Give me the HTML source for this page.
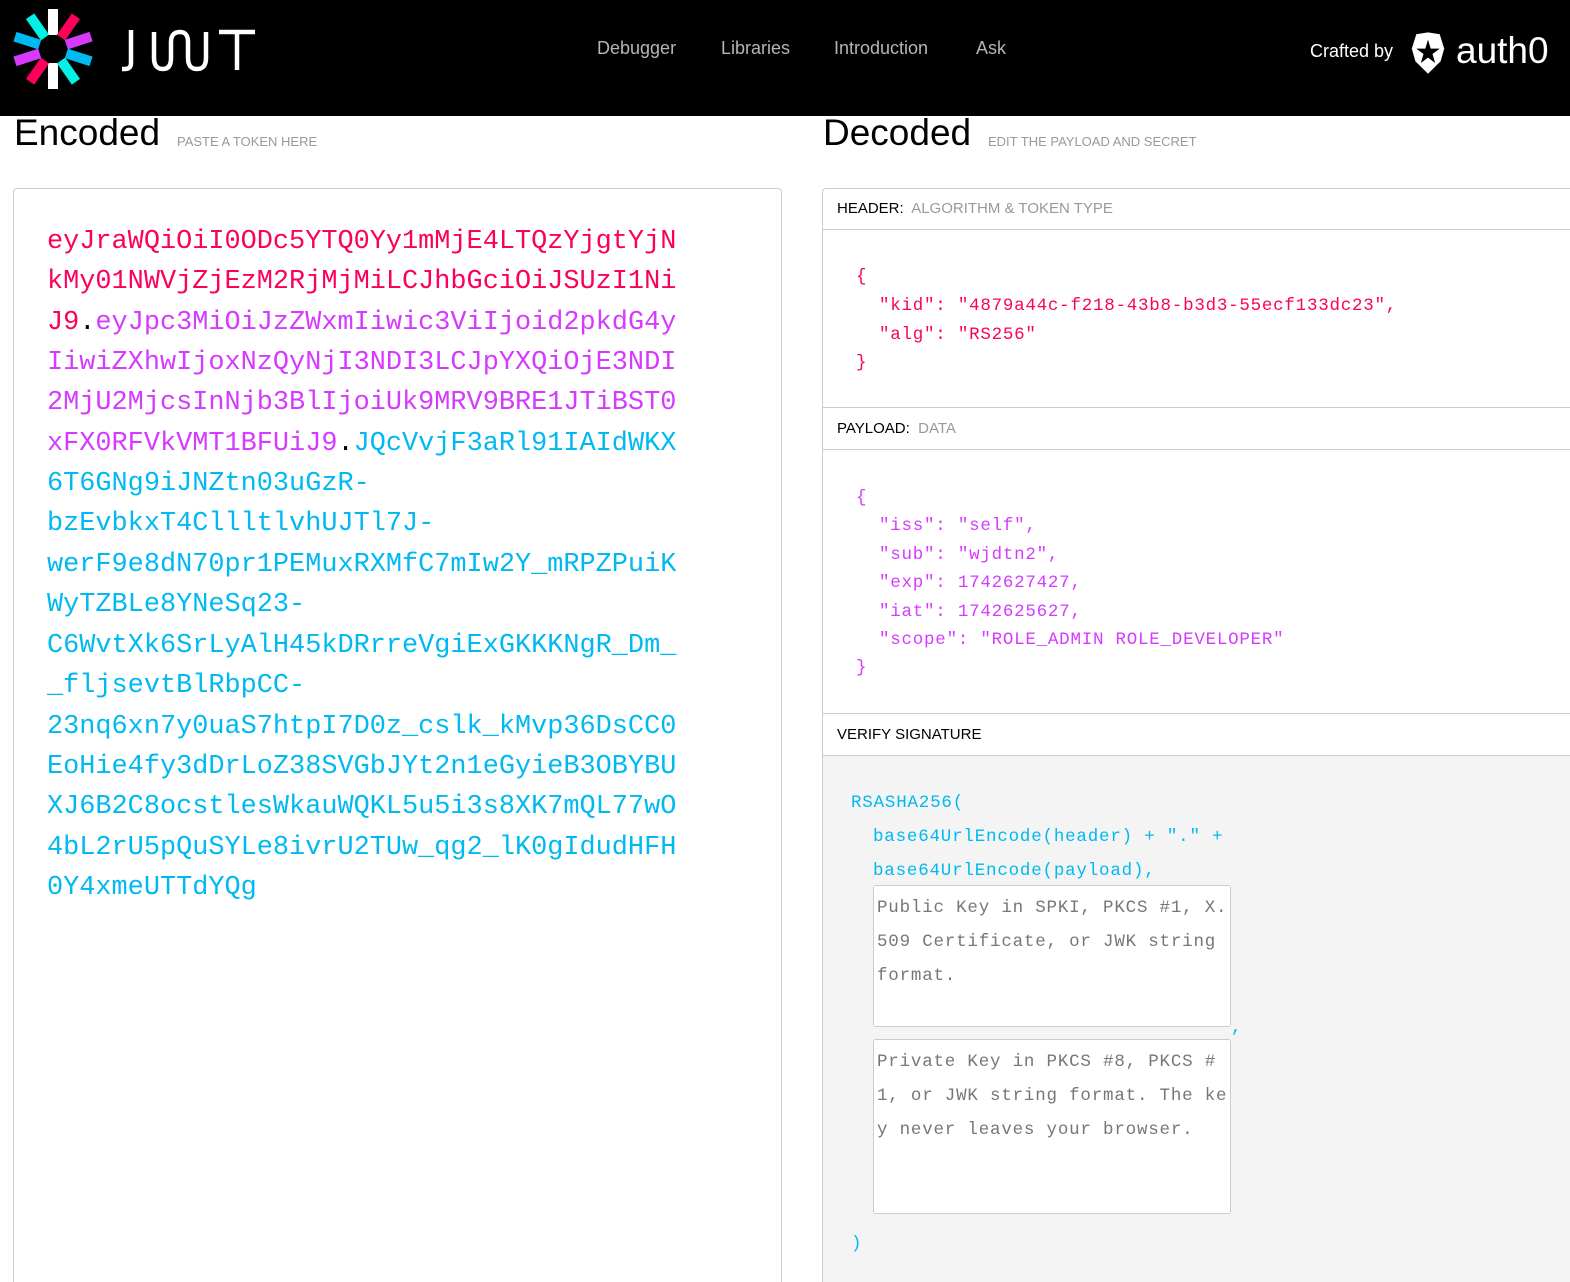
<!DOCTYPE html>
<html style="overflow:hidden"><head><meta charset="utf-8"><style>
*{margin:0;padding:0;box-sizing:border-box}
html,body{width:1570px;height:1282px;overflow:hidden}
body{background:#fff;font-family:"Liberation Sans",sans-serif;position:relative}
.a{position:absolute;white-space:pre}
.top{position:absolute;left:0;top:0;width:1570px;height:116px;background:#000}
.nav{position:absolute;top:38px;font-size:18px;color:#b5b5b5}
.enc{position:absolute;left:47px;font-family:"Liberation Mono",monospace;font-size:26.9px;letter-spacing:0;line-height:40px;height:40px;white-space:pre}
.r{color:#fb015b}.p{color:#d63aff}.b{color:#00b9f1}.k{color:#000}
.js{position:absolute;font-family:"Liberation Mono",monospace;font-size:17.5px;letter-spacing:0.76px;line-height:28px;height:28px;white-space:pre}
.sg{position:absolute;font-family:"Liberation Mono",monospace;font-size:17.5px;letter-spacing:0.8px;line-height:34px;height:34px;white-space:pre;color:#00b9f1}
.ta{position:absolute;left:873px;width:358px;background:#fff;border:1px solid #ccc;border-radius:3px}
.tt{position:absolute;left:877px;font-family:"Liberation Mono",monospace;font-size:17.5px;letter-spacing:0.8px;line-height:34px;height:34px;white-space:pre;color:#777}
.lbl{position:absolute;left:837px;font-size:15px;color:#000}
.lbl span{color:#999}
.hl{position:absolute;left:822px;width:748px;height:1px;background:#ccc}
</style></head><body>
<div class="top"></div>
<svg class="a" style="left:0;top:0" width="270" height="100" viewBox="0 0 270 100">
<g transform="translate(53,49)">
<rect x="-5" y="-40" width="10" height="26" fill="#fff"/>
<rect x="-5" y="14" width="10" height="26" fill="#fff"/>
<rect x="-5" y="-40" width="10" height="26" fill="#fb015b" transform="rotate(35)"/>
<rect x="-5" y="-40" width="10" height="26" fill="#d63aff" transform="rotate(72)"/>
<rect x="-5" y="-40" width="10" height="26" fill="#00b9f1" transform="rotate(108)"/>
<rect x="-5" y="-40" width="10" height="26" fill="#00f2e6" transform="rotate(145)"/>
<rect x="-5" y="-40" width="10" height="26" fill="#fb015b" transform="rotate(215)"/>
<rect x="-5" y="-40" width="10" height="26" fill="#d63aff" transform="rotate(252)"/>
<rect x="-5" y="-40" width="10" height="26" fill="#00b9f1" transform="rotate(288)"/>
<rect x="-5" y="-40" width="10" height="26" fill="#00f2e6" transform="rotate(325)"/>
</g>
<g fill="none" stroke="#fff" stroke-width="4.5">
<path d="M131 30 V63 Q131 69 125 69 H122"/>
<path d="M154 32 V58 Q154 69 163 69 Q171 69 171 58 V42 Q171 32 180 32 Q188 32 188 42 V58 Q188 69 197 69 Q206 69 206 58 V32"/>
<path d="M219 32 H255 M237 32 V70"/>
</g>
</svg>
<div class="nav" style="left:597px">Debugger</div>
<div class="nav" style="left:721px">Libraries</div>
<div class="nav" style="left:834px">Introduction</div>
<div class="nav" style="left:976px">Ask</div>
<div class="a" style="left:1310px;top:41px;font-size:18px;color:#fff">Crafted by</div>
<svg class="a" style="left:1410px;top:31px" width="36" height="46" viewBox="0 0 40 48">
<path d="M7 2 L20 0 L33 2 L38 18 L34 32 L20 46 L6 32 L2 18 Z" fill="#fff"/>
<path d="M20 8 L23 18 L33 18 L25 24 L28 34 L20 28 L12 34 L15 24 L7 18 L17 18 Z" fill="#000"/>
</svg>
<div class="a" style="left:1456px;top:30px;font-size:37px;color:#fff">auth0</div>

<div class="a" style="left:14px;top:112px;font-size:37px;color:#000">Encoded</div>
<div class="a" style="left:177px;top:134px;font-size:13px;color:#999">PASTE A TOKEN HERE</div>
<div class="a" style="left:823px;top:112px;font-size:37px;color:#000">Decoded</div>
<div class="a" style="left:988px;top:134px;font-size:13px;color:#999">EDIT THE PAYLOAD AND SECRET</div>

<div style="position:absolute;left:13px;top:188px;width:769px;height:1094px;border:1px solid #ccc;border-bottom:none;border-radius:4px 4px 0 0"></div>
<div class="enc r" style="top:222px">eyJraWQiOiI0ODc5YTQ0Yy1mMjE4LTQzYjgtYjN</div>
<div class="enc r" style="top:262px">kMy01NWVjZjEzM2RjMjMiLCJhbGciOiJSUzI1Ni</div>
<div class="enc" style="top:303px"><span class="r">J9</span><span class="k">.</span><span class="p">eyJpc3MiOiJzZWxmIiwic3ViIjoid2pkdG4y</span></div>
<div class="enc p" style="top:343px">IiwiZXhwIjoxNzQyNjI3NDI3LCJpYXQiOjE3NDI</div>
<div class="enc p" style="top:383px">2MjU2MjcsInNjb3BlIjoiUk9MRV9BRE1JTiBST0</div>
<div class="enc" style="top:424px"><span class="p">xFX0RFVkVMT1BFUiJ9</span><span class="k">.</span><span class="b">JQcVvjF3aRl91IAIdWKX</span></div>
<div class="enc b" style="top:464px">6T6GNg9iJNZtn03uGzR-</div>
<div class="enc b" style="top:504px">bzEvbkxT4CllltlvhUJTl7J-</div>
<div class="enc b" style="top:545px">werF9e8dN70pr1PEMuxRXMfC7mIw2Y_mRPZPuiK</div>
<div class="enc b" style="top:585px">WyTZBLe8YNeSq23-</div>
<div class="enc b" style="top:626px">C6WvtXk6SrLyAlH45kDRrreVgiExGKKKNgR_Dm_</div>
<div class="enc b" style="top:666px">_fljsevtBlRbpCC-</div>
<div class="enc b" style="top:707px">23nq6xn7y0uaS7htpI7D0z_cslk_kMvp36DsCC0</div>
<div class="enc b" style="top:747px">EoHie4fy3dDrLoZ38SVGbJYt2n1eGyieB3OBYBU</div>
<div class="enc b" style="top:787px">XJ6B2C8ocstlesWkauWQKL5u5i3s8XK7mQL77wO</div>
<div class="enc b" style="top:828px">4bL2rU5pQuSYLe8ivrU2TUw_qg2_lK0gIdudHFH</div>
<div class="enc b" style="top:868px">0Y4xmeUTTdYQg</div>

<div style="position:absolute;left:822px;top:188px;width:748px;height:1094px;border:1px solid #ccc;border-bottom:none;border-right:none;border-radius:4px 0 0 0"></div>
<div style="position:absolute;left:823px;top:756px;width:747px;height:526px;background:#f4f4f4"></div>
<div class="hl" style="top:229px"></div>
<div class="hl" style="top:407px"></div>
<div class="hl" style="top:449px"></div>
<div class="hl" style="top:713px"></div>
<div class="hl" style="top:755px"></div>
<div class="lbl" style="top:200px">HEADER:&nbsp; <span>ALGORITHM &amp; TOKEN TYPE</span></div>
<div class="lbl" style="top:420px">PAYLOAD:&nbsp; <span>DATA</span></div>
<div class="lbl" style="top:726px">VERIFY SIGNATURE</div>

<div class="js r" style="left:856px;top:263px">{</div>
<div class="js r" style="left:879px;top:292px">"kid": "4879a44c-f218-43b8-b3d3-55ecf133dc23",</div>
<div class="js r" style="left:879px;top:321px">"alg": "RS256"</div>
<div class="js r" style="left:856px;top:349px">}</div>

<div class="js p" style="left:856px;top:484px">{</div>
<div class="js p" style="left:879px;top:512px">"iss": "self",</div>
<div class="js p" style="left:879px;top:541px">"sub": "wjdtn2",</div>
<div class="js p" style="left:879px;top:569px">"exp": 1742627427,</div>
<div class="js p" style="left:879px;top:598px">"iat": 1742625627,</div>
<div class="js p" style="left:879px;top:626px">"scope": "ROLE_ADMIN ROLE_DEVELOPER"</div>
<div class="js p" style="left:856px;top:654px">}</div>

<div class="sg" style="left:851px;top:786px">RSASHA256(</div>
<div class="sg" style="left:873px;top:820px">base64UrlEncode(header) + "." +</div>
<div class="sg" style="left:873px;top:854px">base64UrlEncode(payload),</div>
<div class="ta" style="top:885px;height:142px"></div>
<div class="tt" style="top:891px">Public Key in SPKI, PKCS #1, X.</div>
<div class="tt" style="top:925px">509 Certificate, or JWK string</div>
<div class="tt" style="top:959px">format.</div>
<div class="sg" style="left:1231px;top:1011px">,</div>
<div class="ta" style="top:1039px;height:175px"></div>
<div class="tt" style="top:1045px">Private Key in PKCS #8, PKCS #</div>
<div class="tt" style="top:1079px">1, or JWK string format. The ke</div>
<div class="tt" style="top:1113px">y never leaves your browser.</div>
<div class="sg" style="left:851px;top:1227px">)</div>
</body></html>
